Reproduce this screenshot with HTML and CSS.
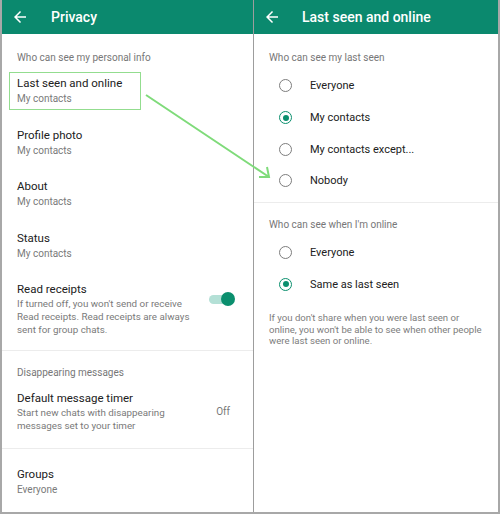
FILE: index.html
```html
<!DOCTYPE html>
<html lang="en">
<head>
    <meta charset="UTF-8">
    <meta name="viewport" content="width=device-width, initial-scale=1.0">
    <title>Privacy - Last seen</title>
    <link rel="stylesheet" href="styles.css">
</head>
<body>

<div class="frame">

    <!-- Pantalla izquierda: Privacy -->
    <div class="panel left">
        <div class="topbar">
            <svg class="back" viewBox="0 0 24 24"><path d="M20 11H7.83l5.59-5.59L12 4l-8 8 8 8 1.41-1.41L7.83 13H20v-2z"/></svg>
            <span class="topbar-title">Privacy</span>
        </div>

        <div class="label first">Who can see my personal info</div>

        <div class="item">
            <div class="mark">
                <div class="title">Last seen and online</div>
                <div class="sub">My contacts</div>
            </div>
        </div>
        <div class="item">
            <div class="title">Profile photo</div>
            <div class="sub">My contacts</div>
        </div>
        <div class="item">
            <div class="title">About</div>
            <div class="sub">My contacts</div>
        </div>
        <div class="item">
            <div class="title">Status</div>
            <div class="sub">My contacts</div>
        </div>
        <div class="item row receipts">
            <div>
                <div class="title">Read receipts</div>
                <div class="desc">If turned off, you won't send or receive<br>Read receipts. Read receipts are always<br>sent for group chats.</div>
            </div>
            <div class="toggle"><span class="knob"></span></div>
        </div>

        <div class="divider"></div>

        <div class="label">Disappearing messages</div>
        <div class="item row timer">
            <div>
                <div class="title">Default message timer</div>
                <div class="desc">Start new chats with disappearing<br>messages set to your timer</div>
            </div>
            <div class="value">Off</div>
        </div>

        <div class="divider"></div>

        <div class="item groups">
            <div class="title">Groups</div>
            <div class="sub">Everyone</div>
        </div>
    </div>

    <!-- Pantalla derecha: Last seen and online -->
    <div class="panel right">
        <div class="topbar">
            <svg class="back" viewBox="0 0 24 24"><path d="M20 11H7.83l5.59-5.59L12 4l-8 8 8 8 1.41-1.41L7.83 13H20v-2z"/></svg>
            <span class="topbar-title">Last seen and online</span>
        </div>

        <div class="label first">Who can see my last seen</div>
        <div class="options">
            <div class="option"><span class="radio"></span>Everyone</div>
            <div class="option"><span class="radio on"></span>My contacts</div>
            <div class="option"><span class="radio"></span>My contacts except...</div>
            <div class="option"><span class="radio"></span>Nobody</div>
        </div>

        <div class="divider"></div>

        <div class="label">Who can see when I'm online</div>
        <div class="options">
            <div class="option"><span class="radio"></span>Everyone</div>
            <div class="option"><span class="radio on"></span>Same as last seen</div>
        </div>

        <div class="note">If you don't share when you were last seen or online, you won't be able to see when other people were last seen or online.</div>
    </div>

    <!-- Flecha verde entre pantallas -->
    <svg class="pointer" viewBox="0 0 500 514" width="500" height="514">
        <path d="M146 95 L269 177 M259 177 L269 177 L267 167" />
    </svg>

</div>

</body>
</html>
```

FILE: styles.css
```css
body {
    margin: 0;
    padding: 0;
    font-family: Roboto, "Liberation Sans", sans-serif;
    background: #fff;
}

.frame {
    position: relative;
    width: 500px;
    height: 514px;
    box-sizing: border-box;
    border: 2px solid #a8a8a8;
    border-top: 0;
    display: flex;
    overflow: hidden;
}

.panel {
    display: flex;
    flex-direction: column;
}

.left {
    width: 251px;
    border-right: 1px solid #9d9d9d;
}

.right {
    flex: 1;
}

/* Barra superior verde */
.topbar {
    height: 34px;
    background: #0b896e;
    display: flex;
    align-items: center;
    color: #fff;
}

.back {
    width: 18px;
    height: 18px;
    fill: #fff;
    margin-left: 9px;
    margin-right: 22px;
}

.right .back {
    margin-right: 21px;
}

.topbar-title {
    font-size: 14px;
    font-weight: 500;
    line-height: 16px;
}

/* Encabezados de seccion */
.label {
    font-size: 10px;
    line-height: 14px;
    color: #777;
    padding: 15px 15px 0;
}

.label.first {
    padding-top: 17px;
}

.right .label {
    padding-bottom: 5px;
}

/* Filas de ajustes */
.item {
    padding: 10px 15px 10.5px;
}

.title {
    font-size: 11.5px;
    line-height: 16px;
    color: #212121;
}

.sub {
    font-size: 10px;
    line-height: 15px;
    color: #7a7a7a;
}

.desc {
    font-size: 9.8px;
    line-height: 13px;
    color: #7a7a7a;
}

.row {
    display: flex;
    justify-content: space-between;
    align-items: center;
}

.receipts {
    align-items: flex-start;
    padding-bottom: 14px;
}

.timer {
    padding-bottom: 16px;
    padding-right: 23px;
}

.groups {
    padding-top: 17px;
}

.value {
    font-size: 10px;
    color: #777;
}

.divider {
    height: 1px;
    background: #ececec;
}

.right .divider {
    margin-top: 5px;
}

/* Recuadro de resaltado */
.mark {
    position: relative;
}

.mark::after {
    content: "";
    position: absolute;
    left: -8px;
    top: -3px;
    width: 132px;
    height: 38px;
    box-sizing: border-box;
    border: 1.5px solid #93dd8f;
}

/* Interruptor */
.toggle {
    position: relative;
    width: 21px;
    height: 9px;
    border-radius: 5px;
    background: #b4e0d6;
    margin-top: 14px;
    margin-right: 8px;
}

.knob {
    position: absolute;
    right: -5px;
    top: -3px;
    width: 14px;
    height: 14px;
    border-radius: 50%;
    background: #0b8f6e;
}

/* Opciones de radio */
.options {
    display: flex;
    flex-direction: column;
}

.option {
    height: 31.7px;
    display: flex;
    align-items: center;
    padding-left: 25px;
    font-size: 11px;
    color: #212121;
}

.radio {
    width: 13px;
    height: 13px;
    box-sizing: border-box;
    border: 1.5px solid #7d7d7d;
    border-radius: 50%;
    margin-right: 18px;
    display: flex;
    align-items: center;
    justify-content: center;
}

.radio.on {
    border-color: #0b8f6e;
}

.radio.on::after {
    content: "";
    width: 6px;
    height: 6px;
    border-radius: 50%;
    background: #0b8f6e;
}

.note {
    padding: 12px 15px 0;
    font-size: 9.6px;
    line-height: 11.5px;
    color: #7d7d7d;
}

/* Flecha */
.pointer {
    position: absolute;
    left: -2px;
    top: 0;
    fill: none;
    stroke: #7fdb7a;
    stroke-width: 2;
    pointer-events: none;
}
```
